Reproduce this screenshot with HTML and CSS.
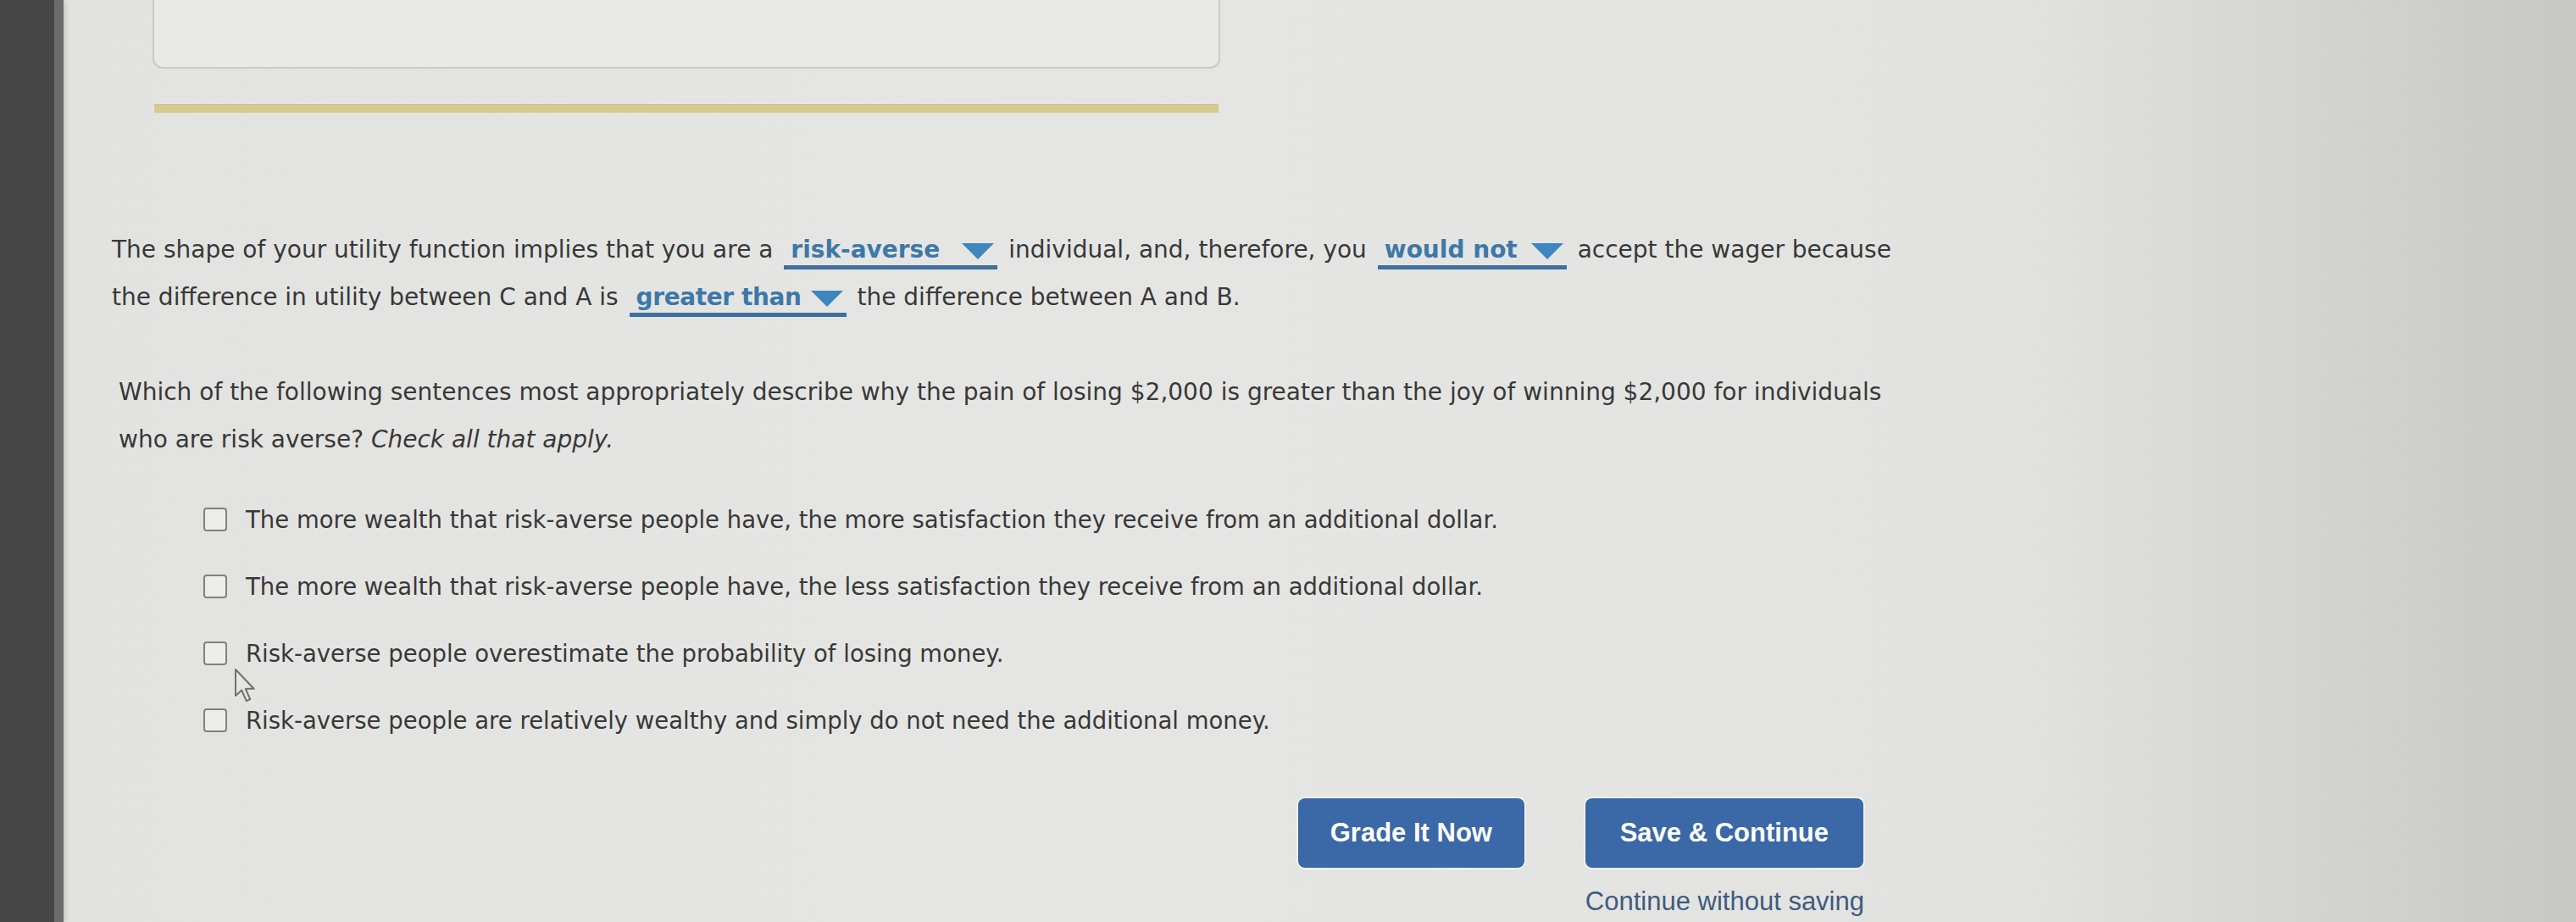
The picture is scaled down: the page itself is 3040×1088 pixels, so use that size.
FILE: index.html
```html
<!DOCTYPE html>
<html lang="en">
<head>
<meta charset="utf-8">
<title>Risk aversion question</title>
<link rel="stylesheet" href="styles.css">
</head>
<body>
<div class="bezel"></div>
<main class="page">
  <div class="graph-box"></div>
  <div class="rule"></div>

  <p class="para">The shape of your utility function implies that you are a <span class="dd dd-1"><span class="dd-text">risk-averse</span><span class="dd-arrow"></span></span> individual, and, therefore, you <span class="dd dd-2"><span class="dd-text">would not</span><span class="dd-arrow"></span></span> accept the wager because<br>the difference in utility between C and A is <span class="dd dd-3"><span class="dd-text">greater than</span><span class="dd-arrow"></span></span> the difference between A and B.</p>

  <p class="para question">Which of the following sentences most appropriately describe why the pain of losing $2,000 is greater than the joy of winning $2,000 for individuals<br>who are risk averse? <em>Check all that apply.</em></p>

  <ul class="options">
    <li class="option"><span class="box"></span><span>The more wealth that risk-averse people have, the more satisfaction they receive from an additional dollar.</span></li>
    <li class="option"><span class="box"></span><span>The more wealth that risk-averse people have, the less satisfaction they receive from an additional dollar.</span></li>
    <li class="option"><span class="box"></span><span>Risk-averse people overestimate the probability of losing money.</span></li>
    <li class="option"><span class="box"></span><span>Risk-averse people are relatively wealthy and simply do not need the additional money.</span></li>
  </ul>

  <div class="actions">
    <div class="action-col"><button class="btn btn-grade">Grade It Now</button></div>
    <div class="action-col"><button class="btn btn-save">Save &amp; Continue</button><a class="link" href="#">Continue without saving</a></div>
  </div>

  <svg class="cursor" width="30" height="42" viewBox="0 0 15 21" aria-hidden="true">
    <path d="M1 1 L1 16.5 L4.6 13.2 L7.4 19.6 L9.6 18.6 L6.9 12.4 L11.8 12.4 Z" fill="#e6e6e4" stroke="#6f6f6f" stroke-width="1" stroke-linejoin="round"/>
  </svg>
</main>
</body>
</html>
```

FILE: styles.css
```css
html, body {
  margin: 0;
  padding: 0;
}
body {
  width: 3040px;
  height: 1088px;
  overflow: hidden;
  display: flex;
  background: linear-gradient(90deg, #e2e3e0 0%, #e5e6e3 40%, #e3e4e1 70%, #e1e2df 79%, #d6d7d4 88%, #c7c7c6 100%);
  font-family: "DejaVu Sans", Verdana, sans-serif;
  color: #383838;
}
.bezel {
  width: 64px;
  flex: 0 0 64px;
  background: #474747;
  border-right: 11px solid #6c6c6c;
  box-shadow: 2px 0 6px rgba(0,0,0,0.15);
}
.page {
  position: relative;
  flex: 1;
  padding-left: 57px;
}
.graph-box {
  margin-left: 48px;
  width: 1256px;
  height: 79px;
  border: 2px solid #c9c9c9;
  border-top: none;
  border-radius: 0 0 12px 12px;
  background: #e9e9e7;
}
.rule {
  margin-top: 42px;
  margin-left: 50px;
  width: 1256px;
  height: 10px;
  background: #d6ca90;
  box-shadow: 0 1px 0 #c9bd83 inset;
}
.para {
  margin: 134px 0 0 0;
  font-size: 28px;
  line-height: 56px;
  white-space: nowrap;
}
.question {
  margin-top: 56px;
  padding-left: 8px;
}
.question em {
  font-style: oblique;
}
.dd {
  display: inline-flex;
  align-items: flex-start;
  justify-content: space-between;
  box-sizing: border-box;
  white-space: nowrap;
  margin: 0 4px;
  padding: 0 4px 3px 8px;
  line-height: 30px;
  border-bottom: 5px solid #3f6f9e;
  vertical-align: baseline;
}
.dd-text {
  color: #3d78a8;
  font-weight: bold;
  white-space: nowrap;
}
.dd-arrow {
  flex: 0 0 auto;
  width: 0;
  height: 0;
  margin-top: 7px;
  margin-left: 10px;
  border-left: 19px solid transparent;
  border-right: 19px solid transparent;
  border-top: 19px solid #3f85bf;
}
.dd-1 { width: 252px; }
.dd-2 { width: 223px; }
.dd-3 { width: 256px; }
.dd-3 .dd-text { letter-spacing: -0.4px; }
.options {
  list-style: none;
  margin: 26px 0 0 0;
  padding: 0 0 0 108px;
}
.option {
  display: flex;
  align-items: center;
  gap: 22px;
  height: 79px;
  font-size: 27.5px;
  white-space: nowrap;
}
.box {
  flex: 0 0 auto;
  width: 24px;
  height: 24px;
  border: 2px solid #808080;
  border-radius: 4px;
  background: #ecece9;
}
.actions {
  display: flex;
  justify-content: flex-end;
  gap: 72px;
  width: 2068px;
  margin-top: 53px;
}
.action-col {
  display: flex;
  flex-direction: column;
  align-items: flex-start;
}
.btn {
  height: 82px;
  border: none;
  border-radius: 8px;
  background: #3b68a6;
  color: #ffffff;
  font-family: "Liberation Sans", Arial, sans-serif;
  font-weight: bold;
  font-size: 31px;
  padding: 0;
  box-shadow: 0 0 0 2px #f1f1ef;
}
.btn-grade { width: 267px; }
.btn-save { width: 328px; }
.link {
  margin-top: 22px;
  font-family: "Liberation Sans", Arial, sans-serif;
  font-size: 31px;
  line-height: 36px;
  color: #3f5b7f;
  text-decoration: none;
}
.cursor {
  position: absolute;
  left: 201px;
  top: 788px;
}
```
